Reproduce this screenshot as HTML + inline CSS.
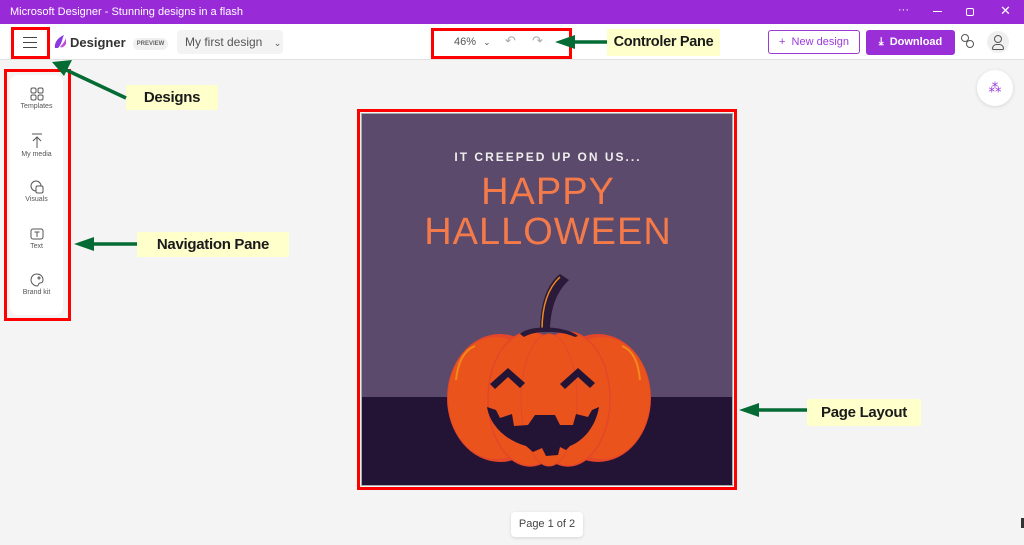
<!DOCTYPE html>
<html><head><meta charset="utf-8"><style>
*{margin:0;padding:0;box-sizing:border-box}
body{width:1024px;height:545px;overflow:hidden;background:#f4f4f4;font-family:"Liberation Sans",sans-serif;position:relative}
.abs{position:absolute}
.title{left:0;top:0;width:1024px;height:24px;background:#982bd7;color:#fff;font-size:11px;line-height:24px;padding-left:10px}
.bar{left:0;top:24px;width:1024px;height:36px;background:#fff;border-bottom:1px solid #e2e2e2}
.red{border:3px solid #f00}
.lbl{background:#ffffcc;color:#1a1a1a;font-weight:bold;font-size:15px;letter-spacing:-0.3px;white-space:nowrap;font-family:"Liberation Sans",sans-serif;text-align:center}
.nav{left:10px;top:75px;width:53px;height:240px;background:#fff;border-radius:8px}
.ni{position:absolute;left:0;width:53px;text-align:center;font-size:7px;color:#555}
</style></head><body>
<div class="abs title">Microsoft Designer - Stunning designs in a flash</div>
<div class="abs" style="left:898px;top:4px;color:#fff;font-size:11px">···</div>
<div class="abs" style="left:933px;top:11px;width:9px;height:1px;background:#fff"></div>
<div class="abs" style="left:966px;top:8px;width:8px;height:8px;border:1px solid #fff;border-radius:2px"></div>
<div class="abs" style="left:1000px;top:3px;color:#fff;font-size:13px">✕</div>
<div class="abs bar"></div>
<div class="abs red" style="left:11px;top:27px;width:39px;height:32px"></div>
<div class="abs" style="left:23px;top:37px;width:14px;height:1px;background:#444;box-shadow:0 5px 0 #444,0 10px 0 #444"></div>
<svg class="abs" style="left:53px;top:34px" width="14" height="16" viewBox="0 0 14 16"><path d="M2 14 C1 8 6 3 11 1 C9 5 9 10 5 14 Z" fill="#8a3be0"/><path d="M7 13 C10 10 12 7 13 4 L13 10 C11 13 9 14 7 13Z" fill="#c24ad9"/></svg>
<div class="abs" style="left:70px;top:35px;font-size:13px;font-weight:bold;color:#333">Designer</div>
<div class="abs" style="left:133px;top:38px;width:35px;height:12px;border-radius:6px;background:#f0f0f0;font-size:6px;color:#666;text-align:center;line-height:12px;font-weight:bold">PREVIEW</div>
<div class="abs" style="left:177px;top:30px;width:106px;height:24px;background:#f3f3f3;border-radius:4px;font-size:12px;color:#555;line-height:24px;padding-left:8px">My first design <span style="margin-left:8px;font-size:9px">⌄</span></div>
<div class="abs red" style="left:431px;top:28px;width:141px;height:31px"></div>
<div class="abs" style="left:454px;top:36px;font-size:11px;color:#555">46% <span style="font-size:9px;margin-left:4px">⌄</span></div>
<div class="abs" style="left:505px;top:33px;font-size:13px;color:#aaa">↶</div>
<div class="abs" style="left:532px;top:33px;font-size:13px;color:#aaa">↷</div>
<div class="abs lbl" style="left:607px;top:29px;width:113px;height:27px;line-height:27px;font-size:14.5px">Controler Pane</div>
<div class="abs" style="left:768px;top:30px;width:92px;height:24px;border:1px solid #9b3ad9;border-radius:3px;color:#9b3ad9;font-size:11px;line-height:22px;text-align:center">+&nbsp; New design</div>
<div class="abs" style="left:866px;top:30px;width:89px;height:25px;background:#9a2fd8;border-radius:3px;color:#fff;font-size:11px;font-weight:bold;line-height:25px;text-align:center">⤓&nbsp; Download</div>
<div class="abs" style="left:961px;top:34px;width:8px;height:8px;border:1.5px solid #555;border-radius:50%"></div>
<div class="abs" style="left:966px;top:40px;width:8px;height:8px;border:1.5px solid #555;border-radius:50%"></div>
<div class="abs" style="left:987px;top:31px;width:22px;height:22px;background:#efefef;border-radius:50%"></div>
<div class="abs" style="left:994px;top:35px;width:8px;height:8px;border:1.3px solid #555;border-radius:50%"></div>
<div class="abs" style="left:992px;top:44px;width:12px;height:6px;border:1.3px solid #555;border-radius:6px 6px 2px 2px"></div>
<div class="abs" style="left:977px;top:70px;width:36px;height:36px;background:#fff;border-radius:50%;box-shadow:0 1px 4px rgba(0,0,0,.12);color:#9b3ad9;text-align:center;line-height:36px;font-size:13px">⁂</div>
<div class="abs red" style="left:4px;top:69px;width:67px;height:252px"></div>
<div class="abs nav">
<div class="ni" style="top:12px"><svg width="14" height="14" viewBox="0 0 14 14" fill="none" stroke="#555" stroke-width="1"><rect x="1" y="1" width="5" height="5" rx="1.5"/><rect x="8" y="1" width="5" height="5" rx="1.5"/><rect x="1" y="8" width="5" height="5" rx="1.5"/><rect x="8" y="8" width="5" height="5" rx="1.5"/></svg><br>Templates</div>
<div class="ni" style="top:58px"><svg width="14" height="16" viewBox="0 0 14 16" fill="none" stroke="#555" stroke-width="1"><path d="M2 1H12M7 15V4M3 8L7 4L11 8"/></svg><br>My media</div>
<div class="ni" style="top:105px"><svg width="14" height="14" viewBox="0 0 14 14" fill="none" stroke="#555" stroke-width="1"><circle cx="6" cy="6" r="5"/><rect x="6" y="6" width="7" height="7" rx="1.5" fill="#fff"/></svg><br>Visuals</div>
<div class="ni" style="top:152px"><svg width="14" height="14" viewBox="0 0 14 14" fill="none" stroke="#555" stroke-width="1"><rect x="1" y="2" width="12" height="10" rx="2"/><path d="M4.5 5H9.5M7 5V10"/></svg><br>Text</div>
<div class="ni" style="top:198px"><svg width="14" height="14" viewBox="0 0 14 14" fill="none" stroke="#555" stroke-width="1"><path d="M7 1C3 1 1 4 1 7C1 10 4 13 7 13C9 13 8 10 10 10C12 10 13 9 13 7C13 3 10 1 7 1Z"/><circle cx="9" cy="5" r="1"/></svg><br>Brand kit</div>
</div>
<div class="abs lbl" style="left:126px;top:85px;width:92px;height:25px;line-height:25px">Designs</div>
<div class="abs lbl" style="left:137px;top:232px;width:152px;height:25px;line-height:25px">Navigation Pane</div>
<div class="abs lbl" style="left:807px;top:399px;width:114px;height:27px;line-height:27px">Page Layout</div>
<div class="abs red" style="left:357px;top:109px;width:380px;height:381px"></div>
<div class="abs" style="left:361px;top:113px;width:372px;height:373px;background:#5b4a6b;overflow:hidden;border:1px solid #aaa">
<div class="abs" style="left:0;top:283px;width:372px;height:90px;background:#231335"></div>
<div class="abs" style="left:0;top:36px;width:372px;text-align:center;color:#eee;font-size:12px;font-weight:bold;letter-spacing:2px">IT CREEPED UP ON US...</div>
<div class="abs" style="left:0;top:58px;width:372px;text-align:center;color:#f47a4a;font-size:38px;line-height:40px;letter-spacing:1px">HAPPY<br>HALLOWEEN</div>
</div>
<svg class="abs" style="left:0;top:0" width="1024" height="545">
<g>
<path d="M540 332 C540 305 546 285 560 274 L569 280 C556 292 550 310 550 332Z" fill="#2b1a3a"/>
<path d="M542 330 C542 305 548 288 560 277" stroke="#f08a1c" stroke-width="1.5" fill="none"/>
<ellipse cx="500" cy="398" rx="53" ry="64" fill="#e4462a"/>
<ellipse cx="598" cy="398" rx="53" ry="64" fill="#e4462a"/>
<ellipse cx="496" cy="398" rx="48" ry="61" fill="#ea531c"/>
<ellipse cx="602" cy="398" rx="48" ry="61" fill="#ea531c"/>
<ellipse cx="530" cy="399" rx="42" ry="67" fill="#ea531c" stroke="#e4462a" stroke-width="1.5"/>
<ellipse cx="568" cy="399" rx="42" ry="67" fill="#ea531c" stroke="#e4462a" stroke-width="1.5"/>
<ellipse cx="549" cy="400" rx="28" ry="66" fill="#ea531c" stroke="#e04a2a" stroke-width="1"/>
<path d="M520 334 C528 325 565 325 578 336 L575 337 C560 330 535 330 524 337Z" fill="#2b1a3a"/>
<path d="M456 380 C458 360 465 350 475 346" stroke="#f08a1c" stroke-width="2" fill="none"/>
<path d="M640 380 C638 360 632 350 622 346" stroke="#f08a1c" stroke-width="2" fill="none"/>
<path d="M490 384 L508 368 L525 383 L520 388 L508 377 L495 389Z" fill="#231335"/>
<path d="M560 384 L578 368 L595 383 L590 388 L578 377 L565 389Z" fill="#231335"/>
<path d="M487 407 L496 410 L500 418 L512 414 L514 426 L528 425 L535 415 L555 415 L560 425 L573 425 L576 414 L588 417 L592 410 L599 407 C596 425 585 440 570 446 L566 450 L560 447 L558 455 L546 456 L542 448 L533 452 L526 446 C505 440 490 425 487 407Z" fill="#231335"/>
</g>
<g fill="#046b35" stroke="#046b35">
<line x1="126" y1="98" x2="62" y2="68" stroke-width="3.5"/><polygon points="52,62 72,60 64,76" stroke="none"/>
<line x1="607" y1="42" x2="570" y2="42" stroke-width="3.5"/><polygon points="555,42 575,35 575,49" stroke="none"/>
<line x1="137" y1="244" x2="88" y2="244" stroke-width="3.5"/><polygon points="74,244 94,237 94,251" stroke="none"/>
<line x1="807" y1="410" x2="754" y2="410" stroke-width="3.5"/><polygon points="739,410 759,403 759,417" stroke="none"/>
</g>
</svg>
<div class="abs" style="left:511px;top:512px;width:72px;height:25px;background:#fff;border-radius:4px;box-shadow:0 1px 3px rgba(0,0,0,.12);font-size:11px;color:#444;text-align:center;line-height:25px">Page 1 of 2</div>
<div class="abs" style="left:1021px;top:518px;width:3px;height:10px;background:#333"></div>
</body></html>
